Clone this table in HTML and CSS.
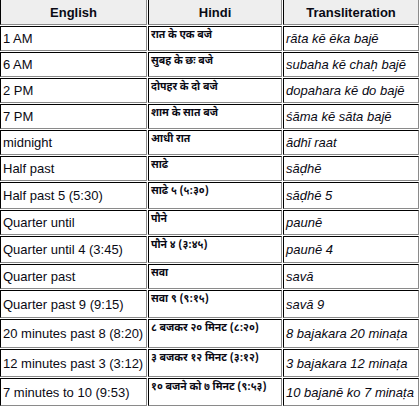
FILE: index.html
```html
<!DOCTYPE html>
<html lang="en">
<head>
<meta charset="utf-8">
<title>Telling time in Hindi</title>
<link rel="stylesheet" href="styles.css">
</head>
<body>
<table class="times">
  <thead>
    <tr class="head">
      <th class="c-en">English</th>
      <th class="c-hi">Hindi</th>
      <th class="c-tr">Transliteration</th>
    </tr>
  </thead>
  <tbody>
    <tr><td>1 AM</td><td class="hi">रात के एक बजे</td><td class="tr">rāta kē ēka bajē</td></tr>
    <tr><td>6 AM</td><td class="hi">सुबह के छः बजे</td><td class="tr">subaha kē chaḥ bajē</td></tr>
    <tr><td>2 PM</td><td class="hi">दोपहर के दो बजे</td><td class="tr">dopahara kē do bajē</td></tr>
    <tr><td>7 PM</td><td class="hi">शाम के सात बजे</td><td class="tr">śāma kē sāta bajē</td></tr>
    <tr><td>midnight</td><td class="hi">आधी रात</td><td class="tr">ādhī raat</td></tr>
    <tr><td>Half past</td><td class="hi">साढे</td><td class="tr">sāḍhē</td></tr>
    <tr class="tall"><td>Half past 5 (5:30)</td><td class="hi">साढे ५ (५:३०)</td><td class="tr">sāḍhē 5</td></tr>
    <tr><td>Quarter until</td><td class="hi">पौने</td><td class="tr">paunē</td></tr>
    <tr class="tall"><td>Quarter until 4 (3:45)</td><td class="hi">पौने ४ (३:४५)</td><td class="tr">paunē 4</td></tr>
    <tr><td>Quarter past</td><td class="hi">सवा</td><td class="tr">savā</td></tr>
    <tr class="taller"><td>Quarter past 9 (9:15)</td><td class="hi">सवा ९ (९:१५)</td><td class="tr">savā 9</td></tr>
    <tr class="tallest"><td>20 minutes past 8 (8:20)</td><td class="hi">८ बजकर २० मिनट (८:२०)</td><td class="tr">8 bajakara 20 minaṭa</td></tr>
    <tr class="taller"><td>12 minutes past 3 (3:12)</td><td class="hi">३ बजकर १२ मिनट (३:१२)</td><td class="tr">3 bajakara 12 minaṭa</td></tr>
    <tr class="taller"><td>7 minutes to 10 (9:53)</td><td class="hi">१० बजने को ७ मिनट (९:५३)</td><td class="tr">10 bajanē ko 7 minaṭa</td></tr>
  </tbody>
</table>
</body>
</html>
```

FILE: styles.css
```css
html, body {
  margin: 0;
  padding: 0;
  background: #ffffff;
}

body {
  font-family: "Liberation Sans", Arial, sans-serif;
  font-size: 13px;
  color: #0a0a14;
  overflow: hidden;
}

.times {
  border-collapse: separate;
  border-spacing: 1px;
  margin: -2px 0 0 -1px;
  table-layout: fixed;
  width: 420px;
}

.times th,
.times td {
  border-style: solid;
  border-width: 1px;
  border-color: #000000 #8a8a8a #8a8a8a #000000;
  padding: 0 2px;
  text-align: left;
  vertical-align: middle;
  box-sizing: border-box;
  line-height: 15px;
  white-space: nowrap;
  overflow: hidden;
}

.times tbody td {
  height: 25px;
}

.times .c-en { width: 147px; }
.times .c-hi { width: 134px; }
.times .c-tr { width: 136px; }

.times th {
  background: #eeeeee;
  font-weight: bold;
  text-align: center;
  height: 26px;
}

.times tr.tall td { height: 27px; }
.times tr.taller td { height: 28px; }
.times tr.tallest td { height: 29px; }

.times td.hi {
  font-family: "Noto Sans Devanagari", "Lohit Devanagari", "Noto Sans", sans-serif;
  font-size: 10.5px;
  font-weight: bold;
  vertical-align: top;
  padding-top: 2px;
  line-height: 13px;
}

.times td.tr {
  font-style: italic;
}
```
